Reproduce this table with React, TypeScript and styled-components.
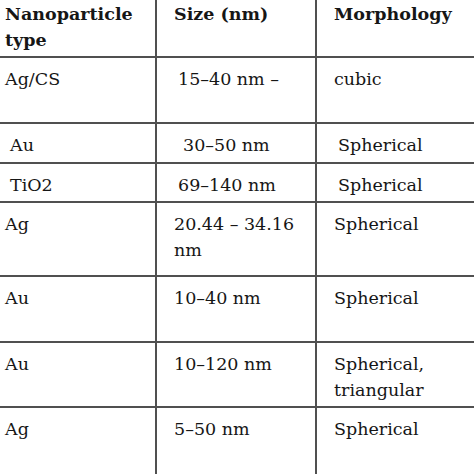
import React from "react";
import styled, { createGlobalStyle } from "styled-components";

const Global = createGlobalStyle`
  html, body { margin: 0; padding: 0; background: #fff; }
  body { width: 474px; height: 474px; overflow: hidden; }
`;

const Grid = styled.div`
  display: grid;
  grid-template-columns: 157px 160px 1fr;
  width: 474px;
  font-family: "DejaVu Serif", "Liberation Serif", serif;
  font-size: 17.5px;
  line-height: 26px;
  color: #161616;
`;

const Cell = styled.div<{ $h: number; $last?: boolean; $bold?: boolean; $indent?: number; $left: number; $open?: boolean }>`
  height: ${(p) => p.$h}px;
  box-sizing: border-box;
  padding: ${(p) => (p.$bold ? 1 : 8)}px 2px 0 ${(p) => p.$left + (p.$indent ?? 0)}px;
  border-bottom: ${(p) => (p.$open ? "none" : "2px solid #505050")};
  border-right: ${(p) => (p.$last ? "none" : "2px solid #505050")};
  font-weight: ${(p) => (p.$bold ? 700 : 400)};
`;

type Row = { h: number; cells: [string, string, string]; indent?: [number, number, number]; bold?: boolean };

const rows: Row[] = [
  { h: 58, cells: ["Nanoparticle type", "Size (nm)", "Morphology"], bold: true },
  { h: 66, cells: ["Ag/CS", "15–40 nm –", "cubic"], indent: [0, 4, 0] },
  { h: 40, cells: ["Au", "30–50 nm", "Spherical"], indent: [5, 9, 4] },
  { h: 39, cells: ["TiO2", "69–140 nm", "Spherical"], indent: [5, 4, 4] },
  { h: 74, cells: ["Ag", "20.44 – 34.16 nm", "Spherical"] },
  { h: 66, cells: ["Au", "10–40 nm", "Spherical"] },
  { h: 65, cells: ["Au", "10–120 nm", "Spherical, triangular"] },
  { h: 80, cells: ["Ag", "5–50 nm", "Spherical"] },
];

const lefts = [5, 17, 17];

export default function App() {
  return (
    <>
      <Global />
      <Grid>
        {rows.map((r, i) =>
          r.cells.map((c, j) => (
            <Cell
              key={`${i}-${j}`}
              $h={r.h}
              $last={j === 2}
              $open={i === rows.length - 1}
              $bold={r.bold}
              $left={lefts[j]}
              $indent={r.indent ? r.indent[j] : 0}
            >
              {c}
            </Cell>
          ))
        )}
      </Grid>
    </>
  );
}
